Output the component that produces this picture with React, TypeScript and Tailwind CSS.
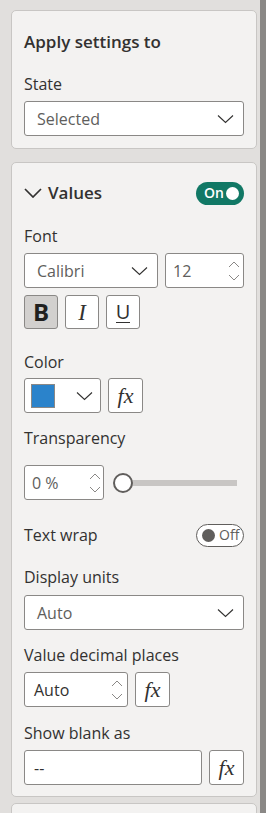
import React from 'react'

const font = { fontFamily: '"Open Sans", "Noto Sans", sans-serif' }

function Chevron({ className = '' }: { className?: string }) {
  return (
    <svg width="17" height="10" viewBox="0 0 17 10" className={className}>
      <path d="M1 1.5 L8.5 8.5 L16 1.5" fill="none" stroke="#323130" strokeWidth="1.1" />
    </svg>
  )
}

function SpinArrows() {
  return (
    <div className="flex flex-col items-center gap-[6px]">
      <svg width="12" height="7" viewBox="0 0 12 7">
        <path d="M1 6 L6 1 L11 6" fill="none" stroke="#8a8886" strokeWidth="1" />
      </svg>
      <svg width="12" height="7" viewBox="0 0 12 7">
        <path d="M1 1 L6 6 L11 1" fill="none" stroke="#8a8886" strokeWidth="1" />
      </svg>
    </div>
  )
}

function Label({ children, className = '' }: { children: React.ReactNode; className?: string }) {
  return <div className={`text-[16px] leading-[20px] text-[#323130] ${className}`}>{children}</div>
}

function Dropdown({ value, className = '' }: { value: string; className?: string }) {
  return (
    <div className={`flex h-[35px] items-center justify-between rounded-[3px] border border-[#8a8886] bg-white pl-[12px] pr-[9px] ${className}`}>
      <span className="text-[16px] text-[#605e5c]">{value}</span>
      <Chevron />
    </div>
  )
}

function Fx({ className = '' }: { className?: string }) {
  return (
    <div className={`flex h-[35px] w-[35px] items-center justify-center rounded-[3px] border border-[#8a8886] bg-white ${className}`}>
      <span className="text-[22px] italic leading-none text-[#323130]" style={{ fontFamily: '"Liberation Serif", serif' }}>
        fx
      </span>
    </div>
  )
}

export default function App() {
  return (
    <div className="flex h-[813px] w-[266px] overflow-hidden bg-[#e1dfdd]" style={font}>
      <div className="flex flex-1 flex-col pl-[11px] pr-[3px] pt-[10px]">
        {/* Apply settings to */}
        <section className="rounded-[5px] border border-[#c8c6c4] bg-[#f3f2f1] px-[12px] pb-[12px] pt-[19px]">
          <div className="text-[17px] font-semibold leading-[24px] text-[#323130]">Apply settings to</div>
          <Label className="mt-[20px]">State</Label>
          <Dropdown value="Selected" className="mt-[7px]" />
        </section>

        {/* Values */}
        <section className="mt-[13px] rounded-[5px] border border-[#c8c6c4] bg-[#f3f2f1] px-[12px] pb-[11px] pt-[18px]">
          <div className="flex h-[24px] items-center justify-between">
            <div className="flex items-center gap-[6px]">
              <svg width="18" height="10" viewBox="0 0 18 10">
                <path d="M1 1 L9 9 L17 1" fill="none" stroke="#323130" strokeWidth="1.7" />
              </svg>
              <span className="text-[17px] font-semibold text-[#323130]">Values</span>
            </div>
            <div className="flex h-[23px] w-[48px] items-center justify-between rounded-full bg-[#117865] pl-[8px] pr-[5px]">
              <span className="text-[14px] font-semibold leading-none text-white">On</span>
              <span className="h-[13px] w-[13px] rounded-full bg-white" />
            </div>
          </div>

          <Label className="mt-[21px]">Font</Label>
          <div className="mt-[7px] flex gap-[7px]">
            <Dropdown value="Calibri" className="w-[134px]" />
            <div className="flex h-[35px] flex-1 items-center justify-between rounded-[3px] border border-[#8a8886] bg-white pl-[7px] pr-[3px]">
              <span className="text-[16px] text-[#605e5c]">12</span>
              <SpinArrows />
            </div>
          </div>
          <div className="mt-[7px] flex gap-[7px]">
            <div className="flex h-[34px] w-[34px] items-center justify-center rounded-[3px] border border-[#8a8886] bg-[#d2d0ce]">
              <span className="text-[24px] font-bold leading-none text-[#201f1e]">B</span>
            </div>
            <div className="flex h-[34px] w-[34px] items-center justify-center rounded-[3px] border border-[#8a8886] bg-white">
              <span className="text-[23px] italic leading-none text-[#323130]" style={{ fontFamily: '"Liberation Serif", serif' }}>
                I
              </span>
            </div>
            <div className="flex h-[34px] w-[34px] items-center justify-center rounded-[3px] border border-[#8a8886] bg-white">
              <span className="border-b-[1.5px] border-[#323130] text-[20px] leading-[21px] text-[#323130]">U</span>
            </div>
          </div>

          <Label className="mt-[23px]">Color</Label>
          <div className="mt-[6px] flex gap-[7px]">
            <div className="flex h-[35px] w-[77px] items-center justify-between rounded-[3px] border border-[#8a8886] bg-white pl-[6px] pr-[7px]">
              <span className="h-[24px] w-[24px] border border-[#8a8886] bg-[#2b83cb]" />
              <Chevron />
            </div>
            <Fx />
          </div>

          <Label className="mt-[15px]">Transparency</Label>
          <div className="mt-[17px] flex items-center">
            <div className="flex h-[35px] w-[80px] items-center justify-between rounded-[3px] border border-[#8a8886] bg-white pl-[7px] pr-[2px]">
              <span className="text-[16px] text-[#605e5c]">0 %</span>
              <SpinArrows />
            </div>
            <div className="relative ml-[9px] flex h-[22px] w-[124px] items-center">
              <div className="ml-[10px] h-[6px] flex-1 bg-[#c8c6c4]" />
              <div className="absolute left-0 top-[1px] h-[20px] w-[20px] rounded-full border-[2.5px] border-[#605e5c] bg-white" />
            </div>
          </div>

          <div className="mt-[25px] flex h-[20px] items-center justify-between">
            <Label>Text wrap</Label>
            <div className="flex h-[23px] w-[48px] items-center gap-[4px] rounded-full border border-[#605e5c] bg-white pl-[5px]">
              <span className="h-[13px] w-[13px] rounded-full bg-[#605e5c]" />
              <span className="text-[14px] leading-none text-[#605e5c]">Off</span>
            </div>
          </div>

          <Label className="mt-[22px]">Display units</Label>
          <Dropdown value="Auto" className="mt-[8px]" />

          <Label className="mt-[15px]">Value decimal places</Label>
          <div className="mt-[7px] flex gap-[7px]">
            <div className="flex h-[35px] w-[104px] items-center justify-between rounded-[3px] border border-[#8a8886] bg-white pl-[9px] pr-[4px]">
              <span className="text-[16px] text-[#323130]">Auto</span>
              <SpinArrows />
            </div>
            <Fx />
          </div>

          <Label className="mt-[16px]">Show blank as</Label>
          <div className="mt-[7px] flex gap-[7px]">
            <div className="flex h-[35px] flex-1 items-center rounded-[3px] border border-[#8a8886] bg-white pl-[9px]">
              <span className="text-[16px] text-[#323130]">--</span>
            </div>
            <Fx />
          </div>
        </section>

        <section className="mt-[6px] h-[40px] shrink-0 rounded-[5px] border border-[#c8c6c4] bg-[#f3f2f1]" />
      </div>
      <div className="h-full w-[6px] shrink-0 bg-[#8a8886]" />
    </div>
  )
}
